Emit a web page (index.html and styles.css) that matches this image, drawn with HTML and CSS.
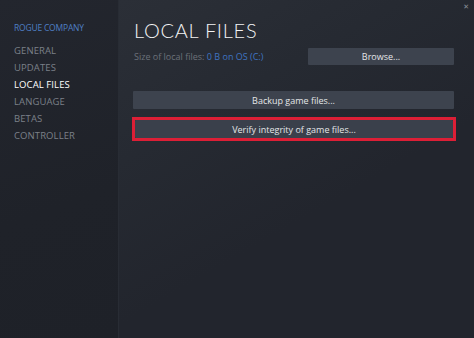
FILE: index.html
```html
<!DOCTYPE html>
<html>
<head>
<meta charset="utf-8">
<link rel="stylesheet" href="styles.css">
</head>
<body>
<div class="window">
  <nav class="sidebar">
    <div class="game">ROGUE COMPANY</div>
    <ul class="menu">
      <li>GENERAL</li>
      <li>UPDATES</li>
      <li class="active">LOCAL FILES</li>
      <li>LANGUAGE</li>
      <li>BETAS</li>
      <li>CONTROLLER</li>
    </ul>
  </nav>
  <main class="content">
    <div class="close">&#x2715;</div>
    <h1 class="title">LOCAL FILES</h1>
    <div class="size-row">
      <span class="size">Size of local files: <span class="link">0 B on OS (C:)</span></span>
      <button class="btn browse">Browse...</button>
    </div>
    <button class="btn wide backup">Backup game files...</button>
    <div class="highlight">
      <button class="btn wide">Verify integrity of game files...</button>
    </div>
  </main>
</div>
</body>
</html>
```

FILE: styles.css
```css
html, body {
  margin: 0;
  padding: 0;
  background: #22252d;
}
.window {
  width: 474px;
  height: 338px;
  display: flex;
  font-family: "Open Sans", "Liberation Sans", sans-serif;
  overflow: hidden;
}
.sidebar {
  width: 119px;
  flex: none;
  background: linear-gradient(160deg, #23262e 0%, #1f2229 60%, #1e2128 100%);
  border-right: 1px solid #282c34;
  padding: 22px 0 0 14px;
  box-sizing: border-box;
}
.game {
  color: #4f7fc4;
  font-size: 8.5px;
  line-height: 12px;
  letter-spacing: -0.2px;
}
.menu {
  list-style: none;
  margin: 8px 0 0;
  padding: 0;
}
.menu li {
  color: #7b8089;
  font-size: 9.5px;
  line-height: 17px;
  letter-spacing: 0.1px;
}
.menu li.active {
  color: #ffffff;
}
.content {
  position: relative;
  flex: 1;
  padding: 18px 20px 0 14px;
  background: linear-gradient(150deg, #2b2f37 0%, #262a32 30%, #22252d 60%, #22252d 100%);
}
.close {
  position: absolute;
  top: 3px;
  right: 5px;
  color: #8b9099;
  font-size: 7px;
  font-family: "DejaVu Sans", sans-serif;
}
.title {
  margin: 0;
  font-family: Lato, "Open Sans", sans-serif;
  font-weight: 300;
  font-size: 20px;
  line-height: 24px;
  letter-spacing: 0.7px;
  color: #f2f3f4;
  padding-left: 1px;
}
.size-row {
  display: flex;
  align-items: center;
  justify-content: space-between;
  margin-top: 6px;
  padding-left: 1px;
}
.size {
  color: #6c717a;
  font-size: 9px;
}
.link {
  color: #3f74c2;
}
.btn {
  display: block;
  border: none;
  margin: 0;
  background: #3d434e;
  color: #e4e6e8;
  font-family: "Open Sans", "Liberation Sans", sans-serif;
  font-size: 9px;
  border-radius: 1px;
  padding: 0;
}
.browse {
  width: 146px;
  height: 17px;
}
.wide {
  width: 100%;
  height: 18px;
}
.backup {
  margin-top: 26px;
}
.highlight {
  margin: 8px -2px 0 -1px;
  border: 3px solid #dc1f36;
}
.highlight .btn {
  background: #3a404b;
}
```
